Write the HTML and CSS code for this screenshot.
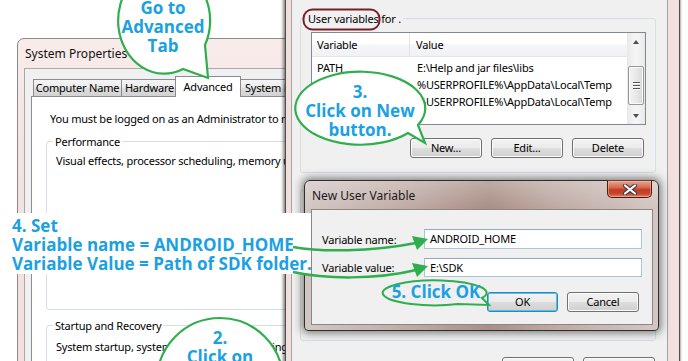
FILE: index.html
```html
<!DOCTYPE html>
<html lang="en">
<head>
<meta charset="utf-8">
<title>Set ANDROID_HOME</title>
<link rel="stylesheet" href="styles.css">
</head>
<body>
<div class="desk">

  <section class="win win-sys">
    <div class="titlebar"><span class="title">System Properties</span></div>
    <div class="win-body sys-body">
      <div class="tabs">
        <div class="tab t-cn">Computer Name</div>
        <div class="tab t-hw">Hardware</div>
        <div class="tab t-adv active">Advanced</div>
        <div class="tab t-sys">System Protection</div>
      </div>
      <div class="tabpanel">
        <p class="note">You must be logged on as an Administrator to make most of these changes.</p>
        <fieldset class="group perf">
          <legend>Performance</legend>
          <p>Visual effects, processor scheduling, memory usage, and virtual memory</p>
        </fieldset>
        <fieldset class="group startup">
          <legend>Startup and Recovery</legend>
          <p class="startup-text">System startup, system failure, and debugging information</p>
        </fieldset>
      </div>
    </div>
  </section>

  <section class="win win-env">
    <div class="titlebar"><span class="title">Environment Variables</span></div>
    <div class="win-body env-body">
      <fieldset class="group uservars">
        <legend>User variables for .</legend>
        <div class="listview">
          <div class="lv-main">
            <div class="lv-header">
              <span class="c1">Variable</span>
              <span class="c2">Value</span>
            </div>
            <div class="lv-rows">
              <div class="lv-row"><span class="c1">PATH</span><span class="c2">E:\Help and jar files\libs</span></div>
              <div class="lv-row"><span class="c1">TEMP</span><span class="c2">%USERPROFILE%\AppData\Local\Temp</span></div>
              <div class="lv-row"><span class="c1">TMP</span><span class="c2">%USERPROFILE%\AppData\Local\Temp</span></div>
            </div>
          </div>
          <div class="scrollbar">
            <div class="sb-btn"><span class="arrow up"></span></div>
            <div class="sb-track">
              <div class="sb-thumb"><span class="grip"></span><span class="grip"></span><span class="grip"></span></div>
            </div>
            <div class="sb-btn"><span class="arrow down"></span></div>
          </div>
        </div>
        <div class="btnrow">
          <button class="btn">New...</button>
          <button class="btn">Edit...</button>
          <button class="btn">Delete</button>
        </div>
      </fieldset>
      <fieldset class="group sysvars">
        <legend>System variables</legend>
        <div class="sysvars-body"></div>
      </fieldset>
      <div class="btnrow env-bottom">
        <button class="btn">OK</button>
        <button class="btn">Cancel</button>
      </div>
    </div>
  </section>

  <section class="win dlg">
    <div class="titlebar dlg-title">
      <span class="title">New User Variable</span>
      <span class="close">
        <svg width="16" height="11" viewBox="0 0 16 11">
          <path d="M3 1.5 L13 9.5 M13 1.5 L3 9.5" stroke="#3a3f4a" stroke-width="4.2" stroke-linecap="round"/>
          <path d="M3 1.5 L13 9.5 M13 1.5 L3 9.5" stroke="#ffffff" stroke-width="2.2" stroke-linecap="round"/>
        </svg>
      </span>
    </div>
    <div class="win-body dlg-body">
      <div class="form">
        <label class="lbl">Variable name:</label>
        <div class="input">ANDROID_HOME</div>
        <label class="lbl">Variable value:</label>
        <div class="input">E:\SDK</div>
      </div>
      <div class="btnrow dlg-buttons">
        <button class="btn default">OK</button>
        <button class="btn">Cancel</button>
      </div>
    </div>
  </section>

  <div class="step4">4. Set<br>Variable name = ANDROID_HOME<br>Variable Value = Path of SDK folder.</div>

  <svg class="overlay" width="688" height="361" viewBox="0 0 688 361">
    <rect x="303.5" y="9.5" width="76" height="20" rx="9" fill="none" stroke="#7d1d2b" stroke-width="2"/>
    <path d="M205 45 L208 78 L183 69 A46 53 0 1 1 205 45 Z" fill="#fff" stroke="#2fae4e" stroke-width="2.2"/>
    <path d="M418 125 L425 143 L408 133 A65 36.5 0 1 1 418 125 Z" fill="#fff" stroke="#2fae4e" stroke-width="2.2"/>
    <circle cx="220" cy="381" r="63" fill="#fff" stroke="#2fae4e" stroke-width="2.2"/>
    <path d="M482 298 L489 305 L458 304 A52 12.5 0 1 1 482 298 Z" fill="none" stroke="#2fae4e" stroke-width="2"/>
    <path d="M293 247 C 320 252, 370 252, 416 243" fill="none" stroke="#2fae4e" stroke-width="2.5"/>
    <polygon points="428,239 412,236 417,250" fill="#2fae4e"/>
    <path d="M293 272 C 325 279, 375 280, 416 270" fill="none" stroke="#2fae4e" stroke-width="2.5"/>
    <polygon points="428,266 412,263 417,277" fill="#2fae4e"/>
  </svg>

  <div class="callout c1">Go to<br>Advanced<br>Tab</div>
  <div class="callout c2">2.<br>Click on<br>Advanced</div>
  <div class="callout c3">3.<br>Click on New<br>button.</div>
  <div class="callout c5">5. Click OK</div>
</div>
</body>
</html>
```

FILE: styles.css
```css
* { box-sizing: border-box; }
html, body { margin: 0; padding: 0; }
body {
  width: 688px;
  height: 361px;
  overflow: hidden;
  background: #fff;
  font-family: "Noto Sans", "Liberation Sans", sans-serif;
  font-size: 11px;
  letter-spacing: -0.2px;
  color: #000;
}
.desk { position: relative; width: 688px; height: 361px; overflow: hidden; }

/* ---------- generic window ---------- */
.win {
  position: absolute;
  z-index: 0;
  display: flex;
  flex-direction: column;
  border: 1px solid #5e5e5e;
  border-radius: 7px 7px 0 0;
}
.titlebar {
  height: 29px;
  flex: none;
  display: flex;
  align-items: center;
  padding-left: 7px;
}
.title { font-size: 12px; letter-spacing: 0; color: #111; white-space: nowrap; }
.win-body { flex: 1; background: #f0f0f0; border: 1px solid #a9a9a9; }

p { margin: 0; line-height: 15px; white-space: nowrap; }

/* ---------- System Properties ---------- */
.win-sys {
  left: 17px;
  top: 38px;
  width: 292px;
  height: 340px;
  background: linear-gradient(180deg, #f8eceb 0%, #f4e3e1 30%, #f2dfdd 100%);
  border-color: #8a8a8a;
}
.sys-body {
  margin-left: 6px;
  padding: 7px 0 0 6px;
  display: flex;
  flex-direction: column;
}
.tabs {
  display: flex;
  align-items: flex-end;
  height: 20px;
  padding-left: 2px;
  position: relative;
  z-index: 1;
  flex: none;
}
.tab {
  height: 17px;
  border: 1px solid #898c95;
  border-bottom: 0;
  background: linear-gradient(180deg, #f4f4f4 0%, #ececec 45%, #dedede 50%, #d2d2d2 100%);
  text-align: center;
  line-height: 15px;
  white-space: nowrap;
  margin-right: -1px;
  flex: none;
}
.t-cn { width: 89px; }
.t-hw { width: 57px; }
.t-adv { width: 66px; }
.t-sys { width: 100px; }
.tab.active {
  height: 21px;
  margin: 0 -1px -1px -2px;
  background: #fff;
  padding-top: 2px;
  line-height: 16px;
  position: relative;
  z-index: 2;
}
.tabpanel {
  flex: 1;
  background: #fff;
  border: 1px solid #898c95;
  padding: 14px 0 0 18px;
}

.group {
  border: 1px solid #d5dfe5;
  border-radius: 3px;
  margin: 0;
  padding: 0 0 0 9px;
}
.group legend {
  padding: 0 2px;
  margin-left: -3px;
  line-height: 15px;
  white-space: nowrap;
}
.perf { margin: 8px 0 0 -4px; width: 270px; height: 176px; }
.perf p { margin-top: 4px; }
.startup { margin: 8px 0 0 -4px; width: 270px; height: 60px; }
.startup-text { margin-top: 6px; }

/* ---------- Environment Variables ---------- */
.win-env {
  left: 285px;
  top: -60px;
  width: 395px;
  height: 450px;
  background: linear-gradient(90deg, #f0dfdd 0%, #f5e8e6 50%, #f1e0de 100%);
  border-color: #4f4f4f;
  box-shadow: -2px 0 3px rgba(0, 0, 0, 0.45), 1px 0 2px rgba(0, 0, 0, 0.3);
}
.env-body {
  margin: 0 11px 0 5px;
  padding: 40px 11px 0 8px;
  border-color: #a3a3a3;
}
.uservars { padding: 0 9px 14px 10px; }
.uservars legend { margin-left: -5px; }

.listview {
  margin-top: 6px;
  height: 93px;
  display: flex;
  background: #fff;
  border: 1px solid #828790;
}
.lv-main { flex: 1; min-width: 0; overflow: hidden; }
.lv-header {
  display: flex;
  height: 24px;
  border-bottom: 1px solid #e5e5e5;
  background: linear-gradient(180deg, #ffffff 0%, #ffffff 45%, #f4f5f7 55%, #f1f2f4 100%);
  align-items: center;
}
.c1 { flex: none; }
.c2 { flex: none; }
.lv-header .c1 { width: 98px; padding-left: 5px; border-right: 1px solid #e3e5e8; height: 100%; line-height: 23px; }
.lv-header .c2 { padding-left: 6px; }
.lv-rows { padding-top: 2px; }
.lv-row { display: flex; height: 17px; line-height: 17px; white-space: nowrap; }
.lv-row .c1 { width: 98px; padding-left: 5px; }
.lv-row .c2 { padding-left: 7px; }

.scrollbar {
  width: 18px;
  flex: none;
  display: flex;
  flex-direction: column;
  background: linear-gradient(90deg, #e9e9e9, #f4f4f4 40%, #f4f4f4 60%, #e9e9e9);
}
.sb-btn { height: 17px; display: flex; align-items: center; justify-content: center; flex: none; }
.arrow { width: 0; height: 0; border-left: 3.5px solid transparent; border-right: 3.5px solid transparent; }
.arrow.up { border-bottom: 4px solid #4d4d4d; }
.arrow.down { border-top: 4px solid #4d4d4d; }
.sb-track { flex: 1; padding: 16px 1px 0 1px; }
.sb-thumb {
  height: 39px;
  border: 1px solid #979797;
  border-radius: 2px;
  background: linear-gradient(90deg, #f3f3f3 0%, #e9e9e9 50%, #d8d8d8 100%);
  box-shadow: inset 0 0 0 1px #fbfbfb;
  display: flex;
  flex-direction: column;
  align-items: center;
  justify-content: center;
  gap: 2px;
}
.grip { width: 7px; height: 1px; background: #555; box-shadow: 0 1px 0 #fff; }

.btnrow { display: flex; justify-content: flex-end; gap: 9px; }
.uservars .btnrow { margin-top: 13px; padding-right: 2px; }
.btn {
  width: 72px;
  height: 20px;
  padding: 0;
  border: 1px solid #707070;
  border-radius: 3px;
  background: linear-gradient(180deg, #f2f2f2 0%, #ebebeb 48%, #dddddd 52%, #cfcfcf 100%);
  box-shadow: inset 0 0 0 1px #fcfcfc;
  font-family: inherit;
  font-size: 11px;
  letter-spacing: -0.2px;
  color: #000;
  line-height: 18px;
  text-align: center;
}
.btn.default {
  width: 71px;
  border-color: #3c7fb1;
  box-shadow: inset 0 0 0 1px #48c4f5;
}

.sysvars { margin-top: 10px; padding: 0; }
.sysvars legend { margin-left: 8px; }
.sysvars-body { height: 142px; }
.env-bottom { margin-top: 16px; padding-right: 1px; gap: 9px; }

/* ---------- New User Variable dialog ---------- */
.dlg {
  left: 304px;
  top: 180px;
  width: 355px;
  height: 151px;
  border-color: #2e2e2e;
  border-radius: 6px 6px 4px 4px;
  background:
    linear-gradient(180deg, rgba(255,255,255,0.25) 0%, rgba(255,255,255,0) 18%),
    linear-gradient(90deg, #d2c7c4 0%, #bfaaa4 30%, #a98f87 52%, #bea9a2 70%, #d3c7c4 100%);
  box-shadow: 0 0 8px 2px rgba(0, 0, 0, 0.5);
}
.dlg-title { height: 28px; }
.dlg-title .title { color: #1a1a1a; }
.close {
  margin-left: auto;
  margin-right: 6px;
  align-self: flex-start;
  margin-top: -1px;
  width: 45px;
  height: 18px;
  border: 1px solid #4b1c14;
  border-top-color: #6a3a32;
  border-radius: 0 0 5px 5px;
  background: linear-gradient(180deg, #e6a592 0%, #d66a50 40%, #c23b22 55%, #c9472c 80%, #e0856a 100%);
  display: flex;
  align-items: center;
  justify-content: center;
  box-shadow: inset 0 0 0 1px rgba(255, 200, 180, 0.45);
}
.dlg-body {
  margin: 0 5px 5px 6px;
  border-color: #8d8584;
  padding: 19px 10px 0 10px;
  display: flex;
  flex-direction: column;
}
.form {
  display: grid;
  grid-template-columns: 102px 218px;
  grid-template-rows: 20px 19px;
  row-gap: 9px;
}
.lbl { align-self: center; white-space: nowrap; }
.input {
  background: #fff;
  border: 1px solid #abc4dd;
  border-top-color: #8fa9c4;
  padding-left: 5px;
  line-height: 18px;
  white-space: nowrap;
}
.dlg-buttons { margin-top: 15px; padding-right: 3px; }

/* ---------- annotations ---------- */
.step4 {
  position: absolute;
  left: 0;
  top: 213px;
  width: 311px;
  height: 61px;
  background: #fff;
  padding: 3px 0 0 12px;
  font-family: "Open Sans", "Noto Sans", sans-serif;
  font-weight: 700;
  font-size: 17px;
  letter-spacing: 0;
  line-height: 19px;
  color: #1ba1e2;
  white-space: nowrap;
}
.overlay { position: absolute; left: 0; top: 0; pointer-events: none; }
.callout {
  position: absolute;
  font-family: "Open Sans", "Noto Sans", sans-serif;
  font-weight: 700;
  font-size: 17px;
  letter-spacing: 0;
  line-height: 19px;
  color: #1ba1e2;
  text-align: center;
  white-space: nowrap;
}
.c1 { left: 113px; top: -2px; width: 100px; }
.c2 { left: 160px; top: 328px; width: 120px; }
.c3 { left: 300px; top: 82px; width: 120px; }
.c5 { left: 386px; top: 282px; width: 100px; }
```
